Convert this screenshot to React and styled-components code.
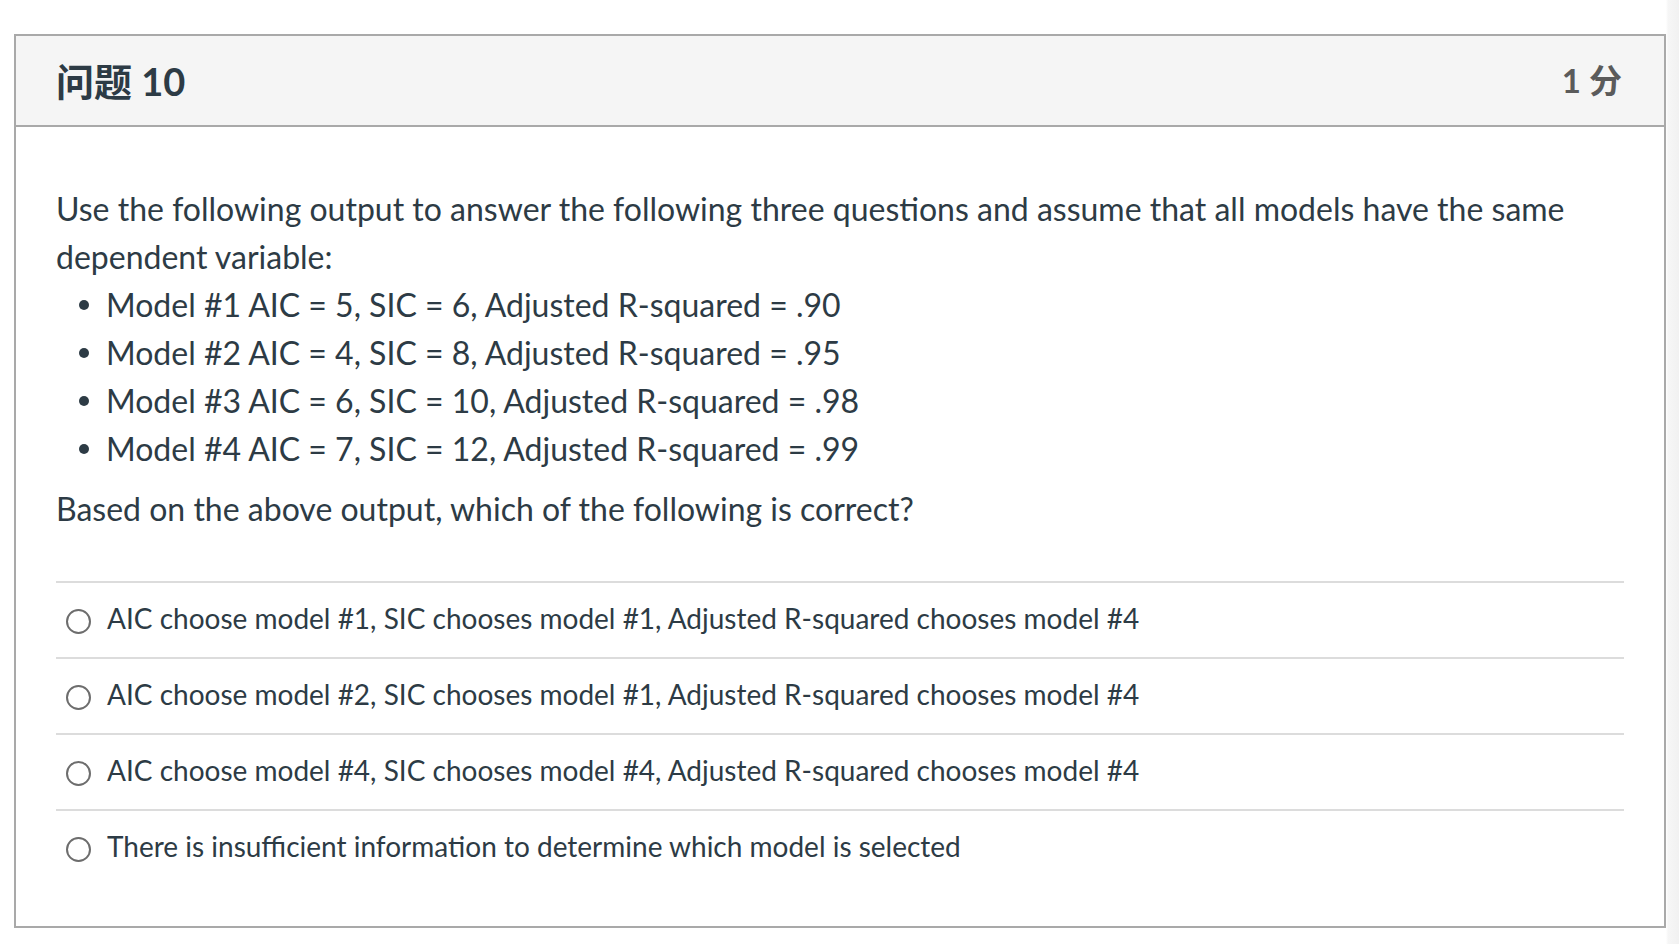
import React from "react";
import styled, { createGlobalStyle } from "styled-components";

const GlobalStyle = createGlobalStyle`
  html, body {
    margin: 0;
    padding: 0;
  }
  body {
    background: linear-gradient(to right, #fff 0, #fff 1666px, #f6f6f6 1668px, #f1f1f1 100%);
    font-family: Lato, "Noto Sans CJK SC", "Noto Sans", sans-serif;
    color: #2d3b45;
  }
`;

const Page = styled.div`
  padding: 34px 13px 17px 14px;
`;

const Card = styled.section`
  box-sizing: border-box;
  width: 1652px;
  border: 2px solid #a9a9a9;
  background: #fff;
`;

const Header = styled.header`
  height: 89px;
  display: flex;
  align-items: center;
  justify-content: space-between;
  padding: 0 42px 0 40px;
  background: #f5f5f5;
  border-bottom: 2px solid #a9a9a9;
`;

const Title = styled.h2`
  margin: 0;
  font-size: 38px;
  font-weight: 700;
  color: #2d3b45;
  line-height: 1;
`;

const Points = styled.span`
  font-size: 33px;
  font-weight: 700;
  color: #5b5b5b;
  line-height: 1;
`;

const Body = styled.div`
  padding: 58px 40px 41px;
`;

const Text = styled.p`
  margin: ${(p) => p.$top || 0}px 0 0;
  font-size: 32px;
  line-height: 48px;
`;

const Facts = styled.ul`
  margin: 0;
  padding: 0;
  list-style: none;
`;

const Fact = styled.li`
  display: flex;
  align-items: center;
  font-size: 32px;
  line-height: 48px;

  &::before {
    content: "";
    flex: none;
    width: 10px;
    height: 10px;
    border-radius: 50%;
    background: #2d3b45;
    margin: 0 17px 0 23px;
  }
`;

const Answers = styled.div`
  margin-top: 48px;
`;

const Answer = styled.label`
  display: flex;
  align-items: center;
  height: 70px;
  padding-bottom: 4px;
  border-top: 2px solid #dcdcdc;
  font-size: 28px;
  color: #2d3b45;
  cursor: pointer;
`;

const Radio = styled.span`
  flex: none;
  box-sizing: border-box;
  width: 25px;
  height: 25px;
  margin: 7px 16px 0 10px;
  border: 2px solid #6d6d6d;
  border-radius: 50%;
  background: #fff;
`;

const answers = [
  "AIC choose model #1, SIC chooses model #1, Adjusted R-squared chooses model #4",
  "AIC choose model #2, SIC chooses model #1, Adjusted R-squared chooses model #4",
  "AIC choose model #4, SIC chooses model #4, Adjusted R-squared chooses model #4",
  "There is insufficient information to determine which model is selected",
];

const facts = [
  "Model #1 AIC = 5, SIC = 6, Adjusted R-squared = .90",
  "Model #2 AIC = 4, SIC = 8, Adjusted R-squared = .95",
  "Model #3 AIC = 6, SIC = 10, Adjusted R-squared = .98",
  "Model #4 AIC = 7, SIC = 12, Adjusted R-squared = .99",
];

export default function App() {
  return (
    <>
      <GlobalStyle />
      <Page>
        <Card>
          <Header>
            <Title>问题 10</Title>
            <Points>1 分</Points>
          </Header>
          <Body>
            <Text>
              Use the following output to answer the following three questions and assume that all
              models have the same dependent variable:
            </Text>
            <Facts>
              {facts.map((f) => (
                <Fact key={f}>{f}</Fact>
              ))}
            </Facts>
            <Text $top={12}>Based on the above output, which of the following is correct?</Text>
            <Answers>
              {answers.map((a) => (
                <Answer key={a}>
                  <Radio />
                  {a}
                </Answer>
              ))}
            </Answers>
          </Body>
        </Card>
      </Page>
    </>
  );
}
